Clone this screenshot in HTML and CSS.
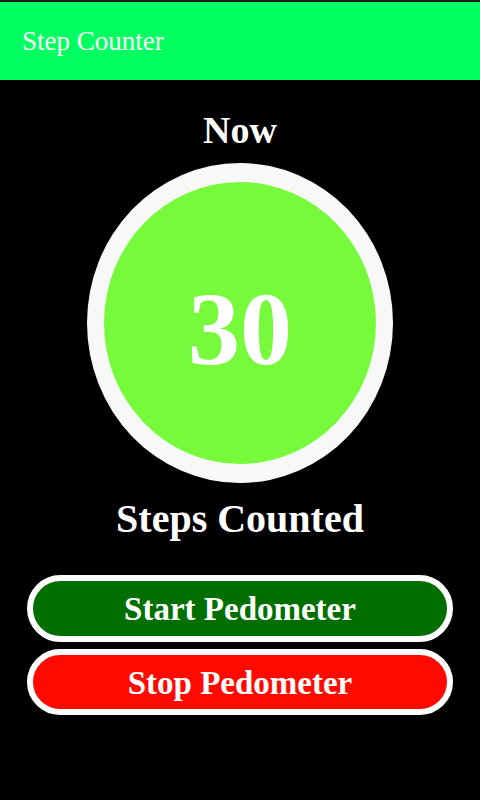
FILE: index.html
```html
<!DOCTYPE html>
<html>
<head>
    <link rel="stylesheet" href="styles.css">
</head>
<body>
    <div class="toolbar">Step Counter</div>

    <div class="main">
        <div class="label-now">Now</div>

        <div class="counter">
            <span id="steps">30</span>
        </div>

        <div class="label-steps">Steps Counted</div>

        <button type="button" class="btn btn-start" id="start">Start Pedometer</button>
        <button type="button" class="btn btn-stop" id="stop">Stop Pedometer</button>
    </div>
</body>
</html>
```

FILE: styles.css
```css
/* Basic page setup */
body {
    margin: 0;
    background-color: #000;
    font-family: "Liberation Serif", "Times New Roman", serif;
    color: #fff;
}

.toolbar {
    height: 78px;
    border-top: 2px solid #1b1b1b;
    background-color: #00ff60;
    display: flex;
    align-items: center;
    padding-left: 22px;
    font-size: 27px;
}

.main {
    display: flex;
    flex-direction: column;
    align-items: center;
}

.label-now {
    margin-top: 28px;
    font-size: 38px;
    font-weight: bold;
    line-height: 44px;
}

/* The big circle with the count */
.counter {
    margin-top: 11px;
    width: 272px;
    height: 282px;
    border-style: solid;
    border-color: #f8f8f8;
    border-width: 19px 17px;
    border-radius: 50%;
    background-color: #78fa3c;
    display: flex;
    align-items: center;
    justify-content: center;
    box-sizing: content-box;
}

#steps {
    font-size: 104px;
    font-weight: bold;
    padding-top: 10px;
}

.label-steps {
    margin-top: 13px;
    font-size: 40px;
    font-weight: bold;
    line-height: 46px;
}

/* Buttons */
.btn {
    box-sizing: border-box;
    width: 426px;
    height: 67px;
    border: 6px solid #fff;
    border-radius: 34px;
    color: #fff;
    font-family: "Liberation Serif", "Times New Roman", serif;
    font-size: 33px;
    font-weight: bold;
    padding: 2px 0 0;
}

.btn-start {
    margin-top: 33px;
    background-color: #006f00;
}

.btn-stop {
    margin-top: 7px;
    height: 66px;
    background-color: #ff0a00;
}
```
